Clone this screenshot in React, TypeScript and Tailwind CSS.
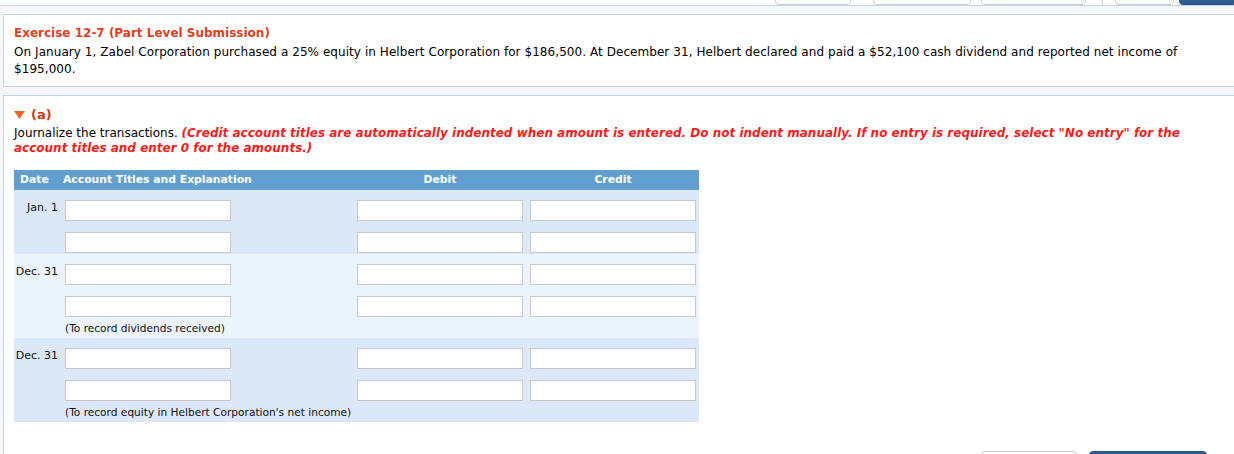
import React from "react";

type Line = { date?: string };
type Entry = { lines: Line[]; memo?: string; shade: string };

const entries: Entry[] = [
  { lines: [{ date: "Jan. 1" }, {}], shade: "bg-[#dce8f8]" },
  {
    lines: [{ date: "Dec. 31" }, {}],
    memo: "(To record dividends received)",
    shade: "bg-[#ebf3fd]",
  },
  {
    lines: [{ date: "Dec. 31" }, {}],
    memo: "(To record equity in Helbert Corporation's net income)",
    shade: "bg-[#dce8f8]",
  },
];

function Box() {
  return (
    <input
      type="text"
      className="block h-[21px] w-[166px] border border-[#c9c9c9] bg-white outline-none"
    />
  );
}

function JournalTable() {
  return (
    <div className="mt-[14px] w-[685px]">
      <div className="grid h-[20px] grid-cols-[49px_294px_173px_169px] items-center bg-[#629fd1] text-[10.8px] font-bold leading-[20px] text-white">
        <span className="pl-[6px]">Date</span>
        <span>Account Titles and Explanation</span>
        <span className="w-[166px] text-center">Debit</span>
        <span className="w-[166px] text-center">Credit</span>
      </div>
      {entries.map((entry, i) => (
        <div key={i} className={`${entry.shade} pb-px pt-[10px]`}>
          <div className="flex flex-col gap-[11px]">
            {entry.lines.map((line, j) => (
              <div
                key={j}
                className="grid grid-cols-[51px_292px_173px_169px] items-start"
              >
                <span className="whitespace-nowrap pr-[7px] text-right text-[11px] leading-[16px] text-[#111]">
                  {line.date ?? ""}
                </span>
                <Box />
                <Box />
                <Box />
              </div>
            ))}
          </div>
          {entry.memo ? (
            <p className="ml-[51px] mt-[3px] text-[10.6px] leading-[17px] text-[#111]">
              {entry.memo}
            </p>
          ) : null}
        </div>
      ))}
    </div>
  );
}

export default function App() {
  return (
    <div className="h-[454px] overflow-hidden bg-[#f4f6fa] font-['DejaVu_Sans',sans-serif] text-[12px] text-black">
      {/* top toolbar, mostly scrolled off */}
      <div className="flex h-[6px] items-end overflow-hidden border-b border-[#c8d3e2] bg-white">
        <div className="ml-[775px] h-[12px] w-[76px] rounded-b border border-[#c5ccd6] bg-white" />
        <div className="ml-[22px] h-[12px] w-[98px] rounded-b border border-[#c5ccd6] bg-white" />
        <div className="ml-[10px] h-[12px] w-[105px] rounded-b border border-[#c5ccd6] bg-white" />
        <div className="ml-[16px] h-[12px] w-px bg-[#c5ccd6]" />
        <div className="ml-[12px] h-[12px] w-[59px] rounded-b border border-[#c5ccd6] bg-white" />
        <div className="ml-[5px] h-[12px] flex-1 rounded-bl border border-[#25507f] bg-[#2e5d8e]" />
      </div>

      <div className="ml-[3px] mt-[8px] border border-r-0 border-[#c8d3e2] bg-white pb-[8px] pl-[10px] pt-[10px]">
        <h1 className="text-[12px] font-bold leading-[17px] text-[#e2401c]">
          Exercise 12-7 (Part Level Submission)
        </h1>
        <p className="mt-[2px] max-w-[1175px] tracking-[0.06px] leading-[17px]">
          On January 1, Zabel Corporation purchased a 25% equity in Helbert
          Corporation for $186,500. At December 31, Helbert declared and paid a
          $52,100 cash dividend and reported net income of $195,000.
        </p>
      </div>

      <div className="ml-[3px] mt-[8px] h-[400px] border border-r-0 border-[#c8d3e2] bg-white pl-[10px] pt-[10px]">
        <div className="flex items-center gap-[6px] leading-[17px]">
          <svg width="11" height="8" viewBox="0 0 11 8" className="mt-px">
            <path d="M0 0 L11 0 L5.5 8 Z" fill="#f26522" />
          </svg>
          <span className="text-[13px] font-bold text-[#d4351c]">(a)</span>
        </div>
        <p className="mt-[3px] max-w-[1175px] leading-[15px]">
          Journalize the transactions.{" "}
          <em className="font-bold text-[#ff1a1a]">
            (Credit account titles are automatically indented when amount is
            entered. Do not indent manually. If no entry is required, select
            "No entry" for the account titles and enter 0 for the amounts.)
          </em>
        </p>

        <JournalTable />

        <div className="mr-[27px] mt-[29px] flex justify-end gap-[12px]">
          <div className="h-[20px] w-[96px] rounded-t border border-[#c5ccd6] bg-white" />
          <div className="h-[20px] w-[118px] rounded-t border border-[#25507f] bg-[#2e5d8e]" />
        </div>
      </div>
    </div>
  );
}
